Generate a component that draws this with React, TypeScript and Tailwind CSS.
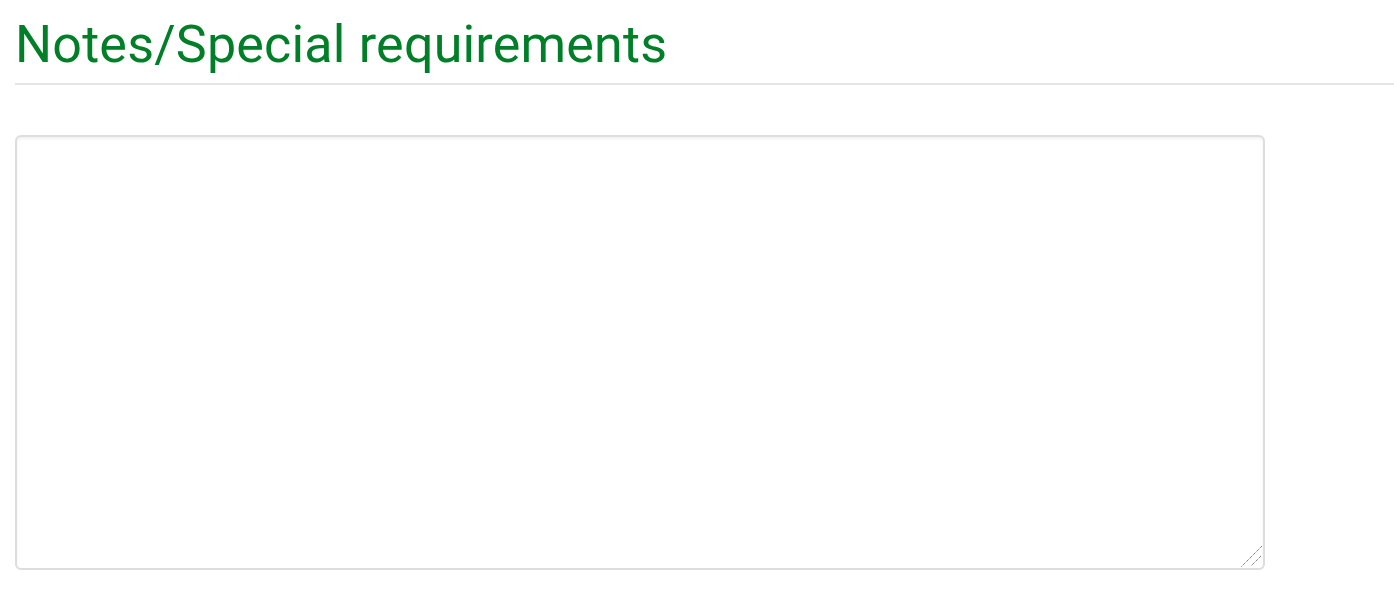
import React from "react";

export default function App() {
  return (
    <div className="bg-white min-h-[600px] pl-[15px]" style={{ fontFamily: "Roboto, 'Noto Sans', sans-serif" }}>
      <h2 className="text-[52px] leading-[60px] font-normal text-[#007f28] pt-[15px] pb-[8px] border-b-2 border-[#e5e5e5] tracking-[0.2px]">
        Notes/Special requirements
      </h2>
      <div className="pt-[50px]">
        <div className="relative w-[1250px] h-[435px]">
          <textarea className="block w-full h-full resize-none border-2 border-[#dddddd] rounded-[6px] shadow-[inset_0_2px_3px_rgba(0,0,0,0.06)] outline-none p-2 text-base" />
          <svg className="absolute left-[1224px] top-[409px] pointer-events-none" width="24" height="24" viewBox="0 0 24 24">
            <line x1="23" y1="2" x2="2" y2="23" stroke="#4b4b4b" strokeWidth="1" strokeDasharray="1 1" />
            <line x1="22" y1="12" x2="12" y2="22" stroke="#4b4b4b" strokeWidth="1" strokeDasharray="1 1" />
          </svg>
        </div>
      </div>
    </div>
  );
}
